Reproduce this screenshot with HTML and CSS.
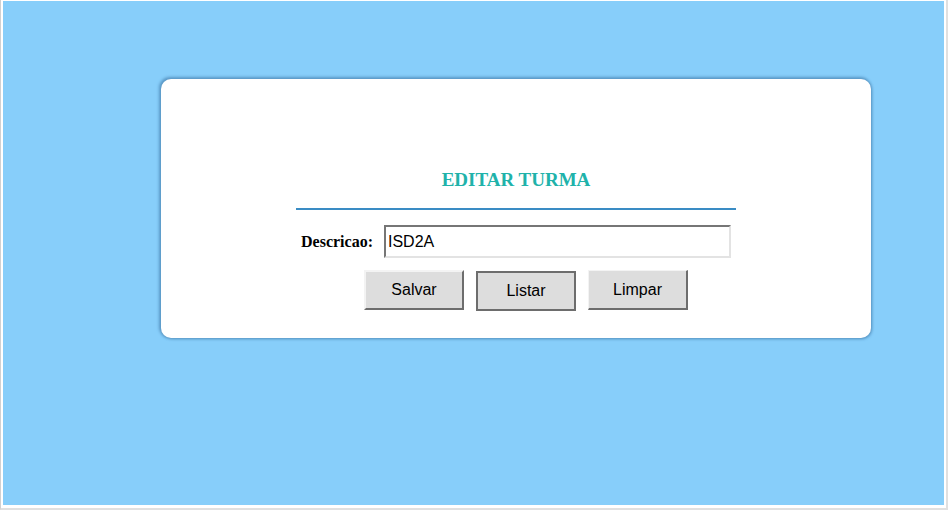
FILE: index.html
```html
<!DOCTYPE html>
<html lang="pt">

<head>
    <meta charset="UTF-8">
    <title>Editar Turma</title>
    <link rel="stylesheet" href="styles.css">
</head>

<body>
    <div class="frame">
        <div class="page">
            <div class="card">
                <h2 class="title">EDITAR TURMA</h2>
                <div class="rule"></div>
                <form class="form">
                    <div class="field">
                        <label for="descricao">Descricao:</label>
                        <input id="descricao" type="text" value="ISD2A">
                    </div>
                    <div class="actions">
                        <button type="button" class="btn">Salvar</button>
                        <button type="button" class="btn btn-pressed">Listar</button>
                        <button type="button" class="btn btn-flat">Limpar</button>
                    </div>
                </form>
            </div>
        </div>
    </div>
</body>

</html>
```

FILE: styles.css
```css
html,
body {
    margin: 0;
    background: #fff;
}

.frame {
    height: 510px;
    box-sizing: border-box;
    border-left: 1px solid #d0d0d0;
    border-right: 2px solid #e0e0e0;
    border-bottom: 2px solid #e0e0e0;
    padding: 1px 2px 3px 2px;
}

.page {
    height: 100%;
    background: #87cefa;
    padding-top: 78px;
    box-sizing: border-box;
}

.card {
    margin-left: 158px;
    width: 710px;
    height: 259px;
    box-sizing: border-box;
    background: #fff;
    border-radius: 10px;
    box-shadow: -1px -1px 3px 1px #5a98c6, 1px 1px 3px #5a98c6;
    padding-top: 89px;
    display: flex;
    flex-direction: column;
    align-items: center;
}

.title {
    margin: 0;
    font-family: "Liberation Serif", serif;
    font-size: 19px;
    line-height: 23px;
    font-weight: bold;
    color: #20b2aa;
}

.rule {
    width: 440px;
    height: 2px;
    background: #3a8cc4;
    margin-top: 17px;
}

.form {
    display: flex;
    flex-direction: column;
    align-items: center;
    margin-top: 15px;
}

.field {
    display: flex;
    align-items: center;
    width: 430px;
    gap: 11px;
}

.field label {
    font-family: "Liberation Serif", serif;
    font-size: 16px;
    font-weight: bold;
    color: #000;
    white-space: nowrap;
}

.field input {
    width: 347px;
    height: 33px;
    box-sizing: border-box;
    border: 2px solid #e3e3e3;
    border-top-color: #767676;
    border-left-color: #767676;
    padding: 0 2px;
    font-family: "Liberation Sans", sans-serif;
    font-size: 16px;
    color: #000;
    outline: none;
}

.actions {
    display: flex;
    align-items: flex-start;
    gap: 12px;
    margin-top: 12px;
    padding-left: 20px;
}

.btn {
    width: 100px;
    height: 40px;
    box-sizing: border-box;
    background: #dddddd;
    border: 2px solid #f3f3f3;
    border-right-color: #6d6d6d;
    border-bottom-color: #6d6d6d;
    font-family: "Liberation Sans", sans-serif;
    font-size: 16px;
    color: #000;
    padding: 0;
}

.btn-pressed {
    margin-top: 1px;
    border-color: #6d6d6d;
}

.btn-flat {
    border: 1px solid #f3f3f3;
    border-right: 2px solid #6d6d6d;
    border-bottom: 2px solid #6d6d6d;
}
```
